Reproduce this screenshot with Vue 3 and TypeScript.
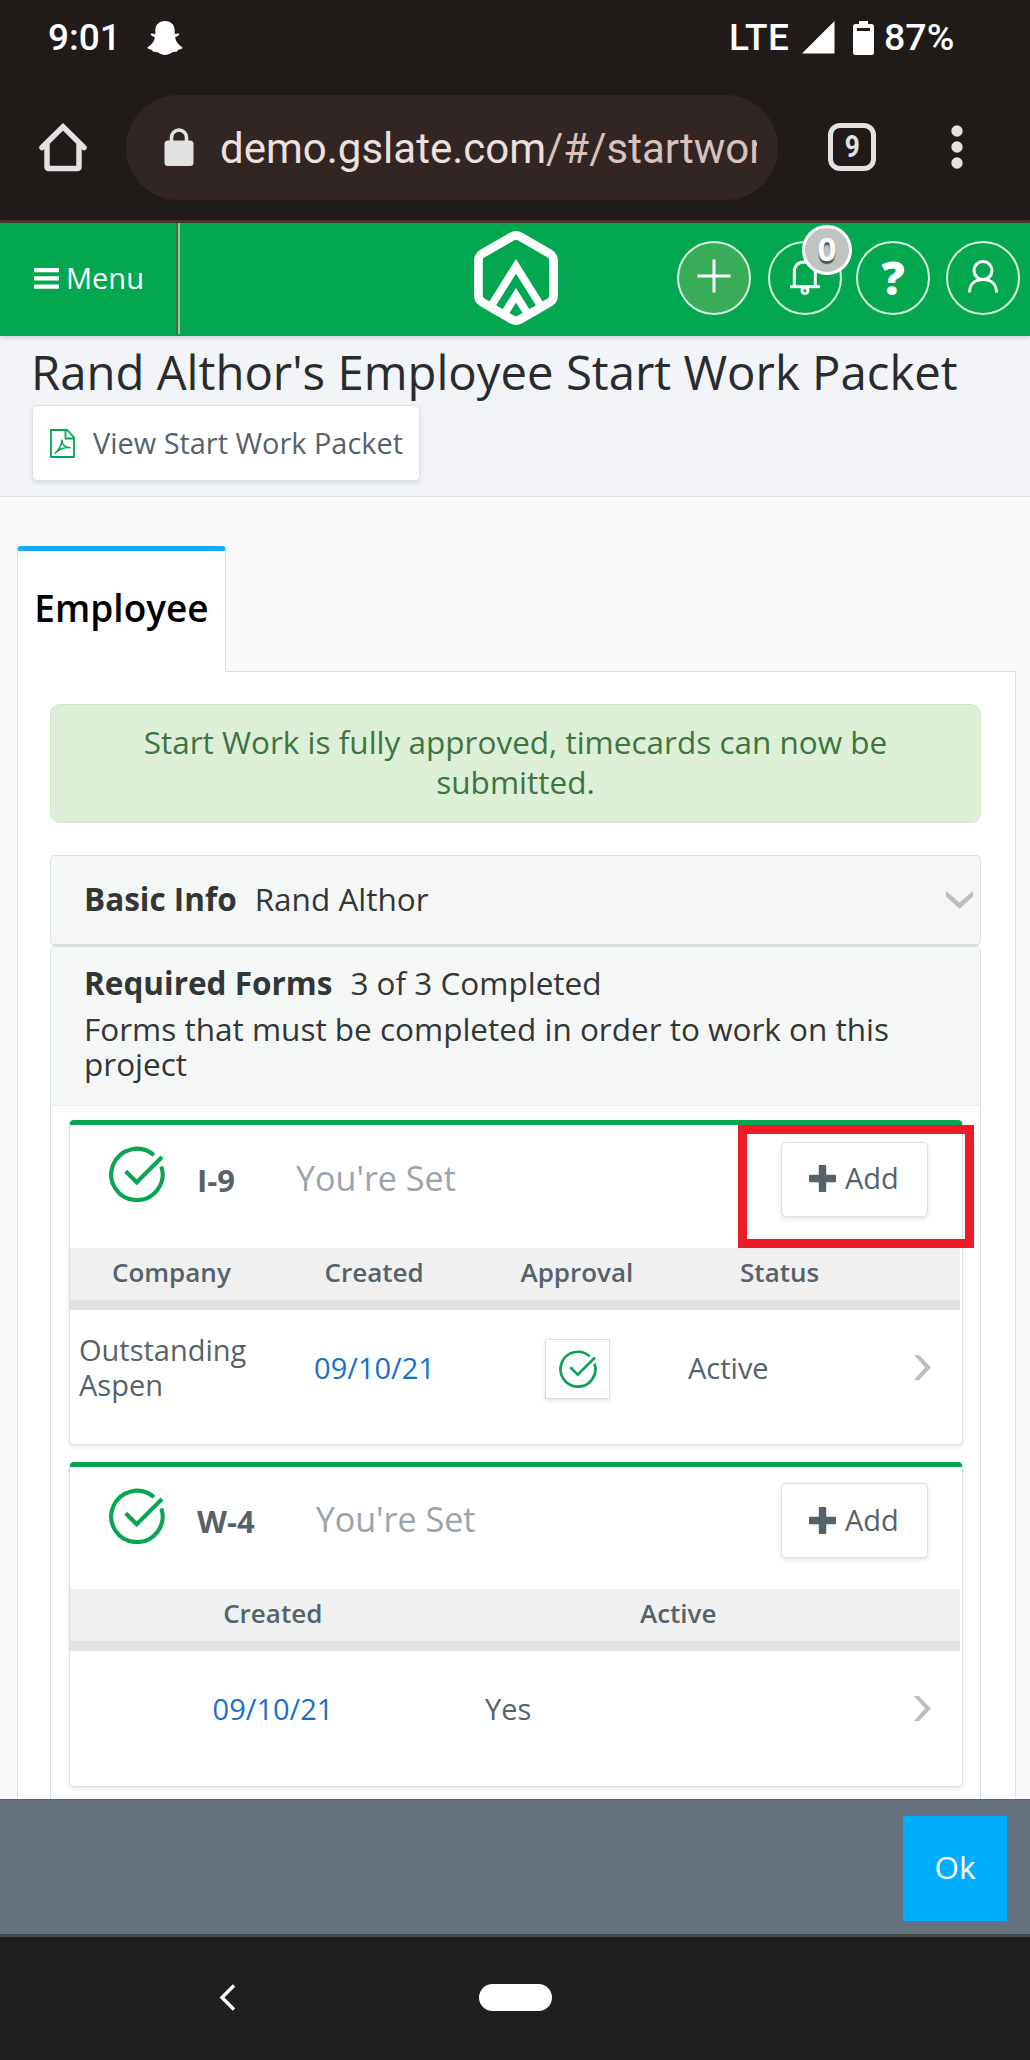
<script setup lang="ts">
interface Cell {
  kind: 'text' | 'date' | 'approval'
  value?: string
}

interface FormCard {
  name: string
  status: string
  columns: string[]
  row: Cell[]
  highlighted: boolean
}

const cards: FormCard[] = [
  {
    name: 'I-9',
    status: "You're Set",
    columns: ['Company', 'Created', 'Approval', 'Status'],
    row: [
      { kind: 'text', value: 'Outstanding Aspen' },
      { kind: 'date', value: '09/10/21' },
      { kind: 'approval' },
      { kind: 'text', value: 'Active' },
    ],
    highlighted: true,
  },
  {
    name: 'W-4',
    status: "You're Set",
    columns: ['Created', 'Active'],
    row: [
      { kind: 'date', value: '09/10/21' },
      { kind: 'text', value: 'Yes' },
    ],
    highlighted: false,
  },
]
</script>

<template>
  <div class="phone">
    <div class="status-bar">
      <span class="clock">9:01</span>
      <svg class="ghost" width="36" height="34" viewBox="0 0 36 34">
        <path
          fill="#fff"
          d="M18 0C12 0 8.300 4 8.300 9.500V13C7 13.400 5.500 12 4 12.800C3 13.600 4.500 15 7.800 16.200C7.600 20 4 24.500 0.500 26.200C0.200 28 3 28.500 5 28.800C5.500 30.500 6 31 7.500 30.800C11 30.300 13.500 34 18 34C22.500 34 25 30.300 28.500 30.800C30 31 30.500 30.500 31 28.800C33 28.500 35.800 28 35.500 26.200C32 24.500 28.400 20 28.200 16.200C31.500 15 33 13.600 32 12.800C30.500 12 29 13.400 27.700 13V9.500C27.700 4 24 0 18 0Z"
        />
      </svg>
      <span class="lte">LTE</span>
      <svg class="signal" width="33" height="33" viewBox="0 0 33 33">
        <path fill="#fff" d="M0 32.500L32.500 0V32.500Z" />
      </svg>
      <svg class="battery" width="21" height="34" viewBox="0 0 21 34">
        <path
          fill="#fff"
          fill-rule="evenodd"
          d="M6 0H15V3H18.500Q21 3 21 5.500V31.500Q21 34 18.500 34H2.500Q0 34 0 31.500V5.500Q0 3 2.500 3H6ZM4 7V10H17V7Z"
        />
      </svg>
      <span class="percent">87%</span>
    </div>

    <div class="browser-bar">
      <svg class="home" width="48" height="49" viewBox="0 0 48 49">
        <path
          d="M3 24.500L24 3.800L45 24.500M8 22V43.500Q8 45.500 10 45.500H38Q40 45.500 40 43.500V22"
          fill="none"
          stroke="#e2e2e2"
          stroke-width="5.500"
          stroke-linecap="round"
        />
      </svg>
      <div class="url">
        <svg width="30" height="38" viewBox="0 0 30 38">
          <path d="M7.500 14V9.500a7.500 7.500 0 0 1 15 0V14" fill="none" stroke="#e2e2e2" stroke-width="3.600" />
          <rect x="0.500" y="12.500" width="29" height="25.500" rx="3.500" fill="#e2e2e2" />
        </svg>
        <span class="address">demo.gslate.com<span class="path">/#/startwork</span></span>
      </div>
      <div class="tab-count"><span>9</span></div>
      <svg class="dots" width="12" height="44" viewBox="0 0 12 44">
        <circle cx="6" cy="6" r="5.700" fill="#e2e2e2" />
        <circle cx="6" cy="22" r="5.700" fill="#e2e2e2" />
        <circle cx="6" cy="38" r="5.700" fill="#e2e2e2" />
      </svg>
    </div>

    <header class="app-header">
      <div class="menu">
        <svg width="25" height="21" viewBox="0 0 25 21">
          <g fill="#fff">
            <rect width="25" height="4.200" rx="0.800" />
            <rect y="8.300" width="25" height="4.200" rx="0.800" />
            <rect y="16.600" width="25" height="4.200" rx="0.800" />
          </g>
        </svg>
        <span>Menu</span>
      </div>
      <svg class="logo" width="84" height="94" viewBox="0 0 84 94">
        <g fill="none" stroke="#fff">
          <path
            d="M46 5.600L75.500 22.600Q79.600 25 79.600 29.500V64.500Q79.600 69 75.500 71.400L46 88.400Q42 90.700 38 88.400L8.500 71.400Q4.400 69 4.400 64.500V29.500Q4.400 25 8.500 22.600L38 5.600Q42 3.300 46 5.600Z"
            stroke-width="8.700"
          />
          <path d="M16.500 76L42 35.300L67.500 76" stroke-width="7.800" />
          <path d="M29.500 84L42 64.300L54.500 84" stroke-width="7.800" />
        </g>
      </svg>
      <div class="actions">
        <div class="round round-add">
          <svg width="34" height="34" viewBox="0 0 34 34">
            <path d="M17 .5V33.500M.5 17H33.500" stroke="#fff" stroke-width="3" />
          </svg>
        </div>
        <div class="round round-bell">
          <svg width="32" height="38" viewBox="0 0 32 38">
            <g fill="none" stroke="#fff" stroke-width="3">
              <path d="M5.300 28V14.500Q5.300 4 15.800 4Q26.300 4 26.300 14.500V28" />
              <path d="M1 28.700H31" />
              <circle cx="16" cy="32.500" r="3" />
            </g>
          </svg>
          <span class="badge">0</span>
        </div>
        <div class="round round-help">?</div>
        <div class="round round-user">
          <svg width="32" height="35" viewBox="0 0 32 35">
            <g fill="none" stroke="#fff" stroke-width="3">
              <circle cx="16" cy="11.500" r="9" />
              <path d="M2.500 33.500C2.500 25 8 20.500 16 20.500S29.500 25 29.500 33.500" />
            </g>
          </svg>
        </div>
      </div>
    </header>

    <main class="content">
      <section class="page-head">
        <h1>Rand Althor's Employee Start Work Packet</h1>
        <button class="view-button">
          <svg width="25" height="29" viewBox="0 0 25 29">
            <g fill="none" stroke="#04a651" stroke-width="1.800">
              <path d="M1 1H17L24 8.500V28H1Z" />
              <path d="M15.500 1V9.500H24" />
              <path
                d="M4.800 24.500C8 22.500 12 15.500 12 10.500C12 15 14.500 18.500 20.500 18.700C16 18 10.500 19 4.800 24.500Z"
                stroke-width="1.500"
              />
            </g>
          </svg>
          <span>View Start Work Packet</span>
        </button>
      </section>

      <div class="tabs"><div class="tab">Employee</div></div>

      <section class="tab-panel">
        <div class="alert">Start Work is fully approved, timecards can now be submitted.</div>

        <div class="panel panel-basic">
          <strong>Basic Info</strong>
          <span>Rand Althor</span>
          <svg class="chevron-down" width="27" height="18" viewBox="0 0 27 18">
            <path d="M0 0L13.500 11.500L27 0V5.500L13.500 18L0 5.500Z" fill="#bdbfbf" />
          </svg>
        </div>

        <div class="panel panel-forms">
          <div class="forms-heading">
            <div class="forms-title"><strong>Required Forms</strong><span>3 of 3 Completed</span></div>
            <p>Forms that must be completed in order to work on this project</p>
          </div>

          <div class="cards">
            <article v-for="card in cards" :key="card.name" class="card">
              <div class="card-head">
                <svg class="done" width="56" height="56" viewBox="0 0 56 56">
                  <g fill="none" stroke="#0aa552" stroke-width="4.100">
                    <path d="M45 9.200A25.700 25.700 0 1 0 52.300 20.300" />
                    <path d="M16.700 25.300L27.700 36.300L53 11" />
                  </g>
                </svg>
                <strong class="form-name">{{ card.name }}</strong>
                <span class="form-status">{{ card.status }}</span>
                <button class="add-button">
                  <svg width="27" height="27" viewBox="0 0 27 27">
                    <path
                      d="M9.800 1Q9.800 0 10.800 0H16.200Q17.200 0 17.200 1V9.800H26Q27 9.800 27 10.800V16.200Q27 17.200 26 17.200H17.200V26Q17.200 27 16.200 27H10.800Q9.800 27 9.800 26V17.200H1Q0 17.200 0 16.200V10.800Q0 9.800 1 9.800H9.800Z"
                      fill="#56626a"
                    />
                  </svg>
                  <span>Add</span>
                </button>
                <div v-if="card.highlighted" class="highlight"></div>
              </div>
              <div class="columns">
                <div v-for="column in card.columns" :key="column" class="column">{{ column }}</div>
              </div>
              <div class="row">
                <div v-for="(cell, i) in card.row" :key="i" class="cell" :class="cell.kind">
                  <div v-if="cell.kind === 'approval'" class="approval-box">
                    <svg width="38" height="38" viewBox="0 0 56 56">
                      <g fill="none" stroke="#0aa552" stroke-width="4">
                        <path d="M45 9.200A25.700 25.700 0 1 0 52.300 20.300" />
                        <path d="M16.700 25.300L27.700 36.300L53 11" />
                      </g>
                    </svg>
                  </div>
                  <template v-else>{{ cell.value }}</template>
                </div>
                <svg class="chevron-right" width="17" height="25" viewBox="0 0 17 25">
                  <path d="M0 0H5L17 12.500L5 25H0L11 12.500Z" fill="#bdbdbd" />
                </svg>
              </div>
            </article>
          </div>
        </div>
      </section>
    </main>

    <footer class="action-bar">
      <button class="ok-button">Ok</button>
    </footer>

    <nav class="nav-bar">
      <svg class="back" width="17" height="27" viewBox="0 0 17 27">
        <path d="M15 1.500L3 13.500L15 25.500" fill="none" stroke="#fff" stroke-width="3.400" />
      </svg>
      <div class="home-pill"></div>
    </nav>
  </div>
</template>

<style>
body {
  background: #1f1f1f;
}
</style>

<style scoped>
.phone,
.phone * {
  box-sizing: border-box;
}
.phone {
  display: flex;
  flex-direction: column;
  width: 1030px;
  height: 2060px;
  overflow: hidden;
  background: #f9f9f9;
  font-family: 'Open Sans', 'Noto Sans', sans-serif;
  color: #56626a;
}
svg {
  display: block;
  flex: none;
}
button {
  margin: 0;
  padding: 0;
  font-family: inherit;
  color: inherit;
}

/* Device status bar */
.status-bar {
  display: flex;
  align-items: center;
  flex: none;
  height: 75px;
  padding-left: 47px;
  background: #201b19;
  color: #fff;
  font: 500 37px/75px Roboto, sans-serif;
}
.clock {
  width: 99px;
  margin-left: 1px;
}
.ghost {
  margin-top: 1px;
}
.lte {
  width: 73px;
  margin-left: 546px;
  letter-spacing: 0.500px;
}
.battery {
  margin: 0 10px 0 18px;
}
.percent {
  font-size: 37.500px;
}

/* Browser toolbar */
.browser-bar {
  display: flex;
  align-items: center;
  flex: none;
  height: 148px;
  padding: 0 67px 1px 39px;
  border-bottom: 3px solid #49382f;
  background: #201b19;
  font-family: Roboto, sans-serif;
}
.url {
  display: flex;
  align-items: center;
  width: 652px;
  height: 105px;
  margin-left: 39px;
  padding: 0 21px 0 38px;
  border-radius: 53px;
  background: #322624;
}
.address {
  flex: 1;
  margin-left: 26px;
  overflow: hidden;
  white-space: nowrap;
  color: #eee0dc;
  font-size: 42px;
  line-height: 60px;
  padding-top: 4px;
}
.path {
  color: #d8c2bb;
}
.tab-count {
  width: 48px;
  height: 48px;
  margin-left: 50px;
  border: 5px solid #e2e2e2;
  border-radius: 12px;
  color: #e2e2e2;
  font-size: 32px;
  font-weight: 700;
  line-height: 37px;
  text-align: center;
}
.tab-count span {
  display: inline-block;
  transform: scaleX(0.820);
}
.dots {
  margin-left: 75px;
}

/* Application header */
.app-header {
  position: relative;
  z-index: 1;
  display: flex;
  align-items: center;
  flex: none;
  height: 113px;
  background: #02a750;
  color: #fff;
  box-shadow: 0 1px 6px rgba(0, 0, 0, 0.180);
}
.menu {
  display: flex;
  align-items: center;
  align-self: flex-start;
  width: 180px;
  height: 111px;
  padding-left: 34px;
  border-right: 2px solid #8fd0a0;
  box-shadow: inset -2px 0 0 #476c45;
  font-size: 29px;
}
.menu span {
  margin: -3px 0 0 7px;
}
.logo {
  margin: 0 0 4px 294px;
}
.actions {
  display: flex;
  margin: 0 10px 4px auto;
}
.round {
  position: relative;
  display: flex;
  align-items: center;
  justify-content: center;
  width: 74px;
  height: 74px;
  border: 2px solid #d5f3e0;
  border-radius: 50%;
}
.round-add {
  background: #38ac56;
}
.round-add svg {
  margin-bottom: 3px;
}
.round-bell {
  margin-left: 17px;
}
.round-bell svg {
  margin-bottom: 1px;
}
.round-help {
  margin-left: 14px;
  padding-bottom: 2px;
  font-size: 46px;
  font-weight: 800;
  line-height: 60px;
}
.round-user {
  margin-left: 16px;
}
.round-user svg {
  margin-bottom: 3px;
}
.badge {
  position: absolute;
  top: -18px;
  left: 32px;
  width: 50px;
  height: 50px;
  border: 3px solid #fff;
  border-radius: 50%;
  background: #c0c4c0;
  font-size: 33px;
  font-weight: 700;
  line-height: 42px;
  text-align: center;
  text-shadow: 0 3px 1px #555;
}

/* Page heading */
.content {
  flex: 1;
  min-height: 0;
  overflow: hidden;
}
.page-head {
  height: 161px;
  padding-left: 32px;
  border-bottom: 1px solid #dee1e4;
  background: #f3f4f7;
}
.page-head h1 {
  height: 69px;
  margin: 0 0 0 -1px;
  color: #2a2b2d;
  font-size: 47.300px;
  font-weight: 400;
  line-height: 71px;
  white-space: nowrap;
}
.view-button {
  display: flex;
  align-items: center;
  width: 388px;
  height: 76px;
  padding-left: 17px;
  border: 1px solid #dde3e5;
  border-radius: 5px;
  background: #fff;
  box-shadow: 0 2px 4px rgba(60, 80, 90, 0.160);
  font-size: 28.900px;
  line-height: 40px;
  white-space: nowrap;
}
.view-button span {
  margin: -1px 0 0 18px;
}

/* Tabs */
.tabs {
  display: flex;
  margin: 49px 0 -1px 17px;
}
.tab {
  position: relative;
  width: 209px;
  height: 126px;
  border: 1px solid #dcdfe0;
  border-top: 5px solid #17aaf8;
  border-bottom: 0;
  border-radius: 4px 4px 0 0;
  background: #fff;
  color: #000;
  font-size: 37px;
  font-weight: 600;
  line-height: 113px;
  text-align: center;
}
.tab-panel {
  width: 999px;
  height: 1200px;
  margin-left: 17px;
  padding: 32px 34px 0 32px;
  border: 1px solid #dcdfe0;
  background: #fff;
}

/* Alert */
.alert {
  height: 119px;
  padding: 17px 60px 0;
  border: 1px solid #d3e6c4;
  border-radius: 10px;
  background: #deefd8;
  color: #3c763d;
  font-size: 31.500px;
  line-height: 40px;
  text-align: center;
}

/* Accordion panels */
.panel {
  border: 1px solid #dae1e4;
  border-radius: 5px;
  background: #fff;
  color: #333636;
  font-size: 31.500px;
  line-height: 35px;
}
.panel-basic {
  display: flex;
  align-items: center;
  height: 91px;
  margin-top: 32px;
  padding: 0 7px 4px 33px;
  border-bottom-width: 2px;
  background: #f5f7f7;
}
.panel-basic span {
  margin-left: 18px;
}
.chevron-down {
  margin: 3px 0 0 auto;
}
.panel-forms {
  height: 1000px;
}
.forms-heading {
  height: 159px;
  padding: 18px 33px 0;
  border-bottom: 1px solid #e9edee;
  border-radius: 5px 5px 0 0;
  background: #f5f7f7;
}
.forms-title {
  margin-bottom: 11px;
}
.forms-title span {
  margin-left: 18px;
}
.forms-heading p {
  margin: 0;
}

/* Form cards */
.cards {
  display: flex;
  flex-direction: column;
  gap: 16.400px;
  padding: 14.400px 17px 0 18px;
  color: #56626a;
}
.card {
  height: 325px;
  border: 1px solid #dbe1e3;
  border-top: 5px solid #06a551;
  border-radius: 5px;
  box-shadow: 0 2px 4px rgba(60, 80, 90, 0.140);
}
.card-head {
  position: relative;
  display: flex;
  align-items: flex-start;
  height: 122.500px;
  padding: 16.500px 34px 0 38.500px;
}
.done {
  margin-top: 4.500px;
}
.form-name {
  margin-left: 32.500px;
  font-size: 31px;
  line-height: 76px;
}
.form-status {
  margin-left: 61px;
  color: #9aa4aa;
  font-size: 34.100px;
  line-height: 73px;
}
.add-button {
  display: flex;
  align-items: center;
  width: 147px;
  height: 75px;
  margin-left: auto;
  padding: 0 0 1px 27px;
  border: 1px solid #dbe1e3;
  border-radius: 5px;
  background: #fff;
  box-shadow: 0 2px 4px rgba(60, 80, 90, 0.160);
  font-size: 29px;
  line-height: 40px;
}
.add-button span {
  margin: -1px 0 0 9px;
}
.highlight {
  position: absolute;
  top: 0;
  right: -12px;
  width: 236px;
  height: 123px;
  border: 9px solid #ed1c24;
}
.columns {
  display: flex;
  height: 62px;
  margin-right: 2px;
  padding-right: 79px;
  border-bottom: 10px solid #e2e2e2;
  background: #f0f0f1;
}
.column {
  flex: 1;
  font-size: 26px;
  font-weight: 600;
  line-height: 48px;
  text-align: center;
}
.row {
  position: relative;
  display: flex;
  align-items: center;
  height: 116px;
  padding-right: 80px;
  font-size: 29px;
  line-height: 34.500px;
}
.cell {
  flex: 1 1 0;
  min-width: 0;
  padding: 0 9px;
}
.date {
  color: #1a6fc9;
  text-align: center;
}
.approval {
  display: flex;
  justify-content: center;
}
.approval-box {
  display: flex;
  align-items: center;
  justify-content: center;
  width: 65px;
  height: 60px;
  margin-top: 2px;
  border: 1px solid #d9dfe1;
  box-shadow: 0 2px 4px rgba(60, 80, 90, 0.160);
}
.chevron-right {
  position: absolute;
  right: 31px;
  top: 45px;
}

/* Bottom bars */
.action-bar {
  position: relative;
  z-index: 1;
  display: flex;
  justify-content: flex-end;
  flex: none;
  height: 138px;
  padding: 16px 23px 0 0;
  border-top: 1px solid #56616b;
  border-bottom: 3px solid #474b4c;
  background: #66727d;
}
.ok-button {
  width: 104px;
  height: 105px;
  padding-bottom: 4px;
  border: 0;
  background: #00aeff;
  color: #fff;
  font-size: 31.500px;
}
.nav-bar {
  display: flex;
  align-items: center;
  flex: none;
  height: 123px;
  padding: 0 0 3px 219px;
  background: #1f1f1f;
}
.home-pill {
  width: 73px;
  height: 27px;
  margin-left: 243px;
  border-radius: 14px;
  background: #fff;
}
</style>
